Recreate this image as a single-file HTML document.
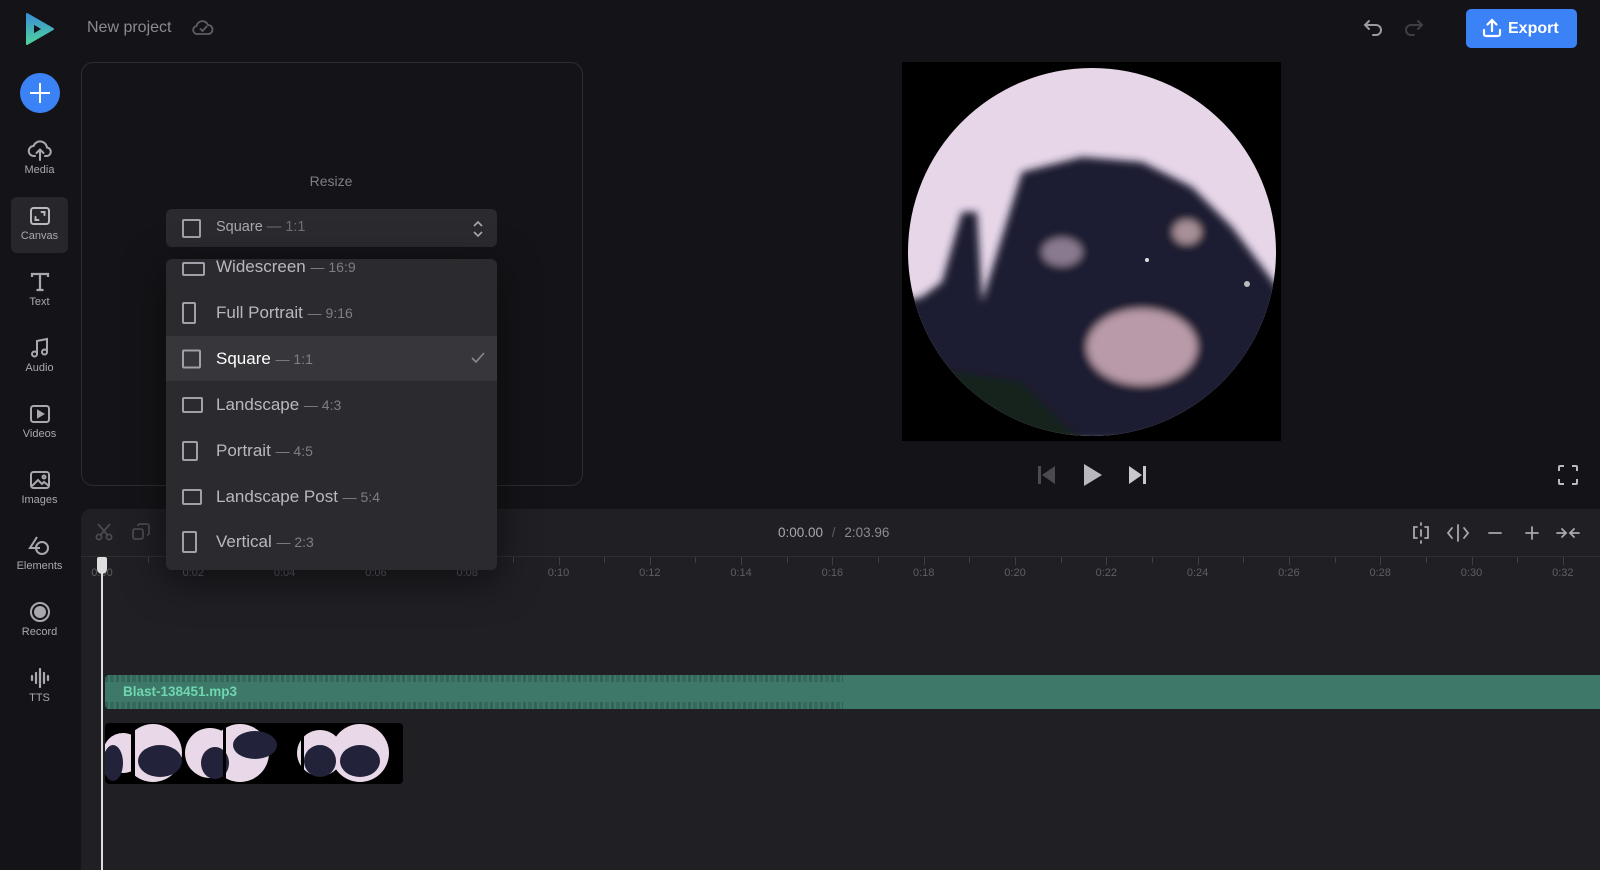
<!DOCTYPE html>
<html><head><meta charset="utf-8"><style>
*{margin:0;padding:0;box-sizing:border-box}
body{width:1600px;height:870px;background:#141418;font-family:"Liberation Sans",sans-serif;position:relative;overflow:hidden;color:#9a9aa0}
.a{position:absolute}
.nav{position:absolute;left:11px;width:57px;height:56px;text-align:center;font-size:11px;color:#a8a8ae}
.nav svg{display:block;margin:8px auto 3px}
.item{position:absolute;left:166px;width:331px;height:46px;font-size:17px;color:#b8b8be}
.item .ic{position:absolute;left:16px;top:50%;transform:translateY(-50%);border:2px solid #a0a0a6;border-radius:2px}
.item .t{position:absolute;left:50px;top:13px}
.item .t span{font-size:14px;color:#7e7e84}
.tick{position:absolute;top:557px;width:1px;height:8px;background:#3e3e44}
.lbl{position:absolute;top:567px;font-size:11px;color:#5e5e64;transform:translateX(-50%)}
</style></head><body>
<svg class="a" style="left:24px;top:12px" width="32" height="34" viewBox="0 0 32 34"><defs><linearGradient id="lg" x1="0" y1="0" x2="0" y2="1"><stop offset="0" stop-color="#3a8fd8"/><stop offset="1" stop-color="#4fd39a"/></linearGradient></defs><path d="M3 2 L29 17 L3 32 Z M9 11 L9 23 L19 17 Z" fill="url(#lg)" fill-rule="evenodd" stroke="url(#lg)" stroke-width="2" stroke-linejoin="round"/></svg>
<div class="a" style="left:87px;top:19px;font-size:16px;color:#8a8a90">New project</div>
<svg class="a" style="left:192px;top:18px" width="22" height="18" viewBox="0 0 22 18" fill="none" stroke="#5e5e64" stroke-width="1.8"><path d="M6 16h10a4.5 4.5 0 0 0 0-9 6 6 0 0 0-11.5 1A4 4 0 0 0 6 16z"/><path d="M8 10.5l2.5 2.5 4.5-5"/></svg>
<svg class="a" style="left:1363px;top:18px" width="22" height="20" viewBox="0 0 22 20" fill="none" stroke="#9a9aa0" stroke-width="2" stroke-linecap="round"><path d="M6 3L2 7l4 4M2 7h11a5 5 0 0 1 0 10h-3"/></svg>
<svg class="a" style="left:1402px;top:18px" width="22" height="20" viewBox="0 0 22 20" fill="none" stroke="#3e3e44" stroke-width="2" stroke-linecap="round"><path d="M16 3l4 4-4 4M20 7H9a5 5 0 0 0 0 10h3"/></svg>
<div class="a" style="left:1466px;top:9px;width:111px;height:39px;background:#3b82f6;border-radius:5px;color:#fff;font-size:16px;font-weight:bold;line-height:39px;padding-left:42px">Export</div>
<svg class="a" style="left:1482px;top:18px" width="20" height="20" viewBox="0 0 20 20" fill="none" stroke="#fff" stroke-width="2.2" stroke-linecap="round"><path d="M10 13V2M5.5 6.5L10 2l4.5 4.5M2 12v4a2 2 0 0 0 2 2h12a2 2 0 0 0 2-2v-4"/></svg>
<div class="a" style="left:20px;top:73px;width:40px;height:40px;border-radius:50%;background:#3b82f6"></div>
<div class="a" style="left:30px;top:92px;width:20px;height:2.4px;background:#fff"></div>
<div class="a" style="left:38.8px;top:83px;width:2.4px;height:20px;background:#fff"></div>
<div class="nav" style="top:131px"><svg width="26" height="22" viewBox="0 0 26 22" fill="none" stroke="#a8a8ae" stroke-width="2" stroke-linecap="round"><path d="M8 17H7a5 5 0 0 1-.5-10 7 7 0 0 1 13.5 1.5A4.2 4.2 0 0 1 19 17h-1"/><path d="M13 21V11M9.5 14L13 10.5 16.5 14"/></svg>Media</div>
<div class="nav" style="top:197px;background:#26262b;border-radius:6px"><svg width="22" height="22" viewBox="0 0 22 22" fill="none" stroke="#b8b8be" stroke-width="2"><rect x="2" y="3" width="18" height="16" rx="2.5"/><path d="M12.5 7h3v3M9.5 15h-3v-3" stroke-linecap="round"/></svg>Canvas</div>
<div class="nav" style="top:263px"><svg width="22" height="22" viewBox="0 0 22 22" fill="none" stroke="#a8a8ae" stroke-width="2.2"><path d="M3 6V3h16v3M11 3v16M7.5 19h7"/></svg>Text</div>
<div class="nav" style="top:329px"><svg width="22" height="22" viewBox="0 0 22 22" fill="none" stroke="#a8a8ae" stroke-width="2"><path d="M8 17V4l10-2v13"/><circle cx="5.5" cy="17" r="2.5"/><circle cx="15.5" cy="15" r="2.5"/></svg>Audio</div>
<div class="nav" style="top:395px"><svg width="22" height="22" viewBox="0 0 22 22" fill="none" stroke="#a8a8ae" stroke-width="2"><rect x="2" y="3" width="18" height="16" rx="2.5"/><path d="M9 8v6l5-3z" fill="#a8a8ae"/></svg>Videos</div>
<div class="nav" style="top:461px"><svg width="22" height="22" viewBox="0 0 22 22" fill="none" stroke="#a8a8ae" stroke-width="2"><rect x="2" y="3" width="18" height="16" rx="2.5"/><path d="M3 17l6-6 4 4 2-2 5 4"/><circle cx="15" cy="8" r="1.5"/></svg>Images</div>
<div class="nav" style="top:527px"><svg width="24" height="22" viewBox="0 0 24 22" fill="none" stroke="#a8a8ae" stroke-width="2"><path d="M9 2L2 13h10"/><circle cx="14" cy="13" r="6"/></svg>Elements</div>
<div class="nav" style="top:593px"><svg width="22" height="22" viewBox="0 0 22 22" fill="none" stroke="#a8a8ae" stroke-width="2"><circle cx="11" cy="11" r="9"/><circle cx="11" cy="11" r="5" fill="#a8a8ae"/></svg>Record</div>
<div class="nav" style="top:659px"><svg width="22" height="22" viewBox="0 0 22 22" stroke="#a8a8ae" stroke-width="2.2" stroke-linecap="round"><path d="M3 9v4M7 6v10M11 2v18M15 6v10M19 9v4"/></svg>TTS</div>
<svg class="a" style="left:82px;top:186px" width="56" height="44" viewBox="0 0 56 44" fill="none" stroke="#1fc98a" stroke-width="4.5" stroke-linecap="round" stroke-linejoin="round"><path d="M51 5L8 33M9 12L7 34l25 4"/></svg>
<div class="a" style="left:81px;top:62px;width:502px;height:424px;border:1px solid #2c2c31;border-radius:12px;background:#141418"></div>
<div class="a" style="left:0;top:173px;width:662px;text-align:center;font-size:14px;color:#7e7e84">Resize</div>
<div class="a" style="left:166px;top:209px;width:331px;height:38px;background:#2a2a2f;border-radius:6px"></div>
<div class="a" style="left:182px;top:219px;width:19px;height:19px;border:2px solid #a0a0a6;border-radius:2px"></div>
<div class="a" style="left:216px;top:219px;font-size:14.5px;color:#a8a8ae">Square <span style="color:#6e6e74">— 1:1</span></div>
<svg class="a" style="left:472px;top:220px" width="12" height="18" viewBox="0 0 12 18" fill="none" stroke="#a8a8ae" stroke-width="1.6"><path d="M2 6l4-4 4 4M2 12l4 4 4-4"/></svg>
<div class="a" style="left:81px;top:509px;width:1519px;height:361px;background:#1f1f24;border-radius:10px 0 0 0"></div>
<div class="a" style="left:81px;top:556px;width:1519px;height:1px;background:#2e2e34"></div>
<svg class="a" style="left:94px;top:522px" width="20" height="20" viewBox="0 0 20 20" fill="none" stroke="#4a4a50" stroke-width="1.8"><circle cx="5" cy="15" r="2.6"/><circle cx="15" cy="15" r="2.6"/><path d="M6.5 13L16 2M13.5 13L4 2"/></svg>
<svg class="a" style="left:131px;top:522px" width="20" height="20" viewBox="0 0 20 20" fill="none" stroke="#4a4a50" stroke-width="1.8"><rect x="2" y="7" width="10" height="10" rx="2"/><path d="M7 4a2 2 0 0 1 2-2h7a2 2 0 0 1 2 2v7a2 2 0 0 1-2 2"/></svg>
<div class="a" style="left:778px;top:525px;font-size:13.5px;color:#a8a8ae">0:00.00 <span style="color:#5e5e64;margin:0 5px">/</span> <span style="color:#8a8a90">2:03.96</span></div>
<svg class="a" style="left:1406px;top:522px" width="190" height="22" viewBox="0 0 190 22" fill="none" stroke="#a8a8ae" stroke-width="1.8" stroke-linecap="round"><path d="M15 1v2M15 8v6M15 19v2M11 5h-3v11h3M19 5h3v11h-3"/><path d="M52 3v16M46 6l-4 5 4 5M58 6l4 5-4 5"/><path d="M83 11h12"/><path d="M120 11h12M126 5v12"/><path d="M151 11h8M156 7l4 4-4 4M173 11h-8M168 7l-4 4 4 4"/></svg>
<div id="ticks"></div>
<div class="a" style="left:105px;top:675px;width:1495px;height:34px;background:#3d7868;border-radius:4px 0 0 4px;overflow:hidden">
<div class="a" style="left:0;top:0;width:738px;height:34px;background:repeating-linear-gradient(90deg,#2f5e52 0 3px,#3d7868 3px 5px,#33665a 5px 9px,#3d7868 9px 11px);opacity:.85"></div>
<div class="a" style="left:0;top:7px;width:738px;height:20px;background:#3d7868"></div>
</div>
<div class="a" style="left:123px;top:684px;font-size:13.5px;font-weight:bold;color:#6fd6b0">Blast-138451.mp3</div>
<div class="a" style="left:105px;top:723px;width:298px;height:61px;background:#000;border-radius:4px;overflow:hidden">
<svg width="298" height="61" viewBox="0 0 298 61"><g fill="#e8d8e8"><circle cx="48" cy="30" r="29"/><circle cx="135" cy="30" r="29"/><circle cx="255" cy="30" r="29"/><circle cx="18" cy="30" r="20"/><circle cx="105" cy="30" r="25"/><circle cx="215" cy="30" r="23"/></g><g fill="#22223a"><ellipse cx="55" cy="38" rx="22" ry="16"/><ellipse cx="150" cy="22" rx="22" ry="14"/><ellipse cx="255" cy="38" rx="20" ry="16"/><ellipse cx="110" cy="40" rx="14" ry="16"/><ellipse cx="215" cy="38" rx="16" ry="16"/><ellipse cx="8" cy="40" rx="10" ry="18"/></g><rect x="26" y="0" width="4" height="61" fill="#000"/><rect x="118" y="0" width="3" height="61" fill="#000"/><rect x="196" y="0" width="3" height="61" fill="#000"/></svg>
</div>
<div class="a" style="left:902px;top:62px;width:379px;height:379px;background:#000">
<svg width="379" height="379" viewBox="0 0 379 379"><defs><clipPath id="c"><circle cx="190" cy="190" r="184"/></clipPath><filter id="b"><feGaussianBlur stdDeviation="4"/></filter></defs><g clip-path="url(#c)"><rect width="379" height="379" fill="#e6d6e8"/><g filter="url(#b)"><path d="M0 240 L20 235 L40 220 L60 150 L75 150 L80 240 L120 110 L180 95 L240 100 L290 125 L330 165 L379 230 L379 379 L0 379 Z" fill="#1c1c30"/><ellipse cx="240" cy="285" rx="55" ry="38" fill="#b89aa8"/><ellipse cx="160" cy="190" rx="20" ry="14" fill="#8a7a90"/><ellipse cx="285" cy="170" rx="14" ry="12" fill="#a89098"/><path d="M0 379 L0 300 L120 320 L180 379Z" fill="#15201c"/></g><circle cx="245" cy="198" r="2" fill="#ddd"/><circle cx="345" cy="222" r="3" fill="#bbb"/></g></svg>
</div>
<svg class="a" style="left:1035px;top:463px" width="120" height="24" viewBox="0 0 120 24"><path d="M3 3h3v18H3zM20 3v18L7 12z" fill="#4a4a50"/><path d="M49 1v22l18-11z" fill="#b8b8be"/><path d="M94 3v18l13-9zM108 3h3v18h-3z" fill="#c8c8ce"/></svg>
<svg class="a" style="left:1557px;top:464px" width="22" height="22" viewBox="0 0 22 22" fill="none" stroke="#b8b8be" stroke-width="2"><path d="M2 7V3a1 1 0 0 1 1-1h4M15 2h4a1 1 0 0 1 1 1v4M20 15v4a1 1 0 0 1-1 1h-4M7 20H3a1 1 0 0 1-1-1v-4"/></svg>
<div class="a" style="left:166px;top:259px;width:331px;height:311px;background:#2a2a2f;border-radius:6px;box-shadow:0 10px 40px rgba(0,0,0,.5);overflow:hidden">
<div class="a" style="left:0;top:77px;width:331px;height:45px;background:#36363b"></div>
</div>
<div class="item" style="top:244px"><div class="ic" style="width:23px;height:14px;top:25px"></div><div class="t">Widescreen <span>— 16:9</span></div></div>
<div class="item" style="top:290px"><div class="ic" style="width:14px;height:22px"></div><div class="t">Full Portrait <span>— 9:16</span></div></div>
<div class="item" style="top:336px;color:#fff"><div class="ic" style="width:19px;height:19px"></div><div class="t">Square <span>— 1:1</span></div><svg class="a" style="left:305px;top:16px" width="14" height="12" viewBox="0 0 14 12" fill="none" stroke="#8a8a90" stroke-width="1.6"><path d="M1 6l4 4 8-9"/></svg></div>
<div class="item" style="top:382px"><div class="ic" style="width:21px;height:16px"></div><div class="t">Landscape <span>— 4:3</span></div></div>
<div class="item" style="top:428px"><div class="ic" style="width:16px;height:20px"></div><div class="t">Portrait <span>— 4:5</span></div></div>
<div class="item" style="top:474px"><div class="ic" style="width:20px;height:16px"></div><div class="t">Landscape Post <span>— 5:4</span></div></div>
<div class="item" style="top:519px"><div class="ic" style="width:15px;height:22px"></div><div class="t">Vertical <span>— 2:3</span></div></div>
<div class="a" style="left:101px;top:560px;width:2px;height:310px;background:#ddd"></div>
<div class="a" style="left:97px;top:557px;width:10px;height:17px;background:#ddd;border-radius:2px 2px 5px 5px"></div>
<script>
var h='';for(var i=0;i<=33;i++){var x=102+i*45.65;h+='<div class="tick" style="left:'+x+'px;height:'+(i%2?6:8)+'px"></div>';if(i%2==0){var s=i;h+='<div class="lbl" style="left:'+x+'px">0:'+(s<10?'0':'')+s+'</div>';}}
document.getElementById('ticks').innerHTML=h;
</script>
</body></html>
